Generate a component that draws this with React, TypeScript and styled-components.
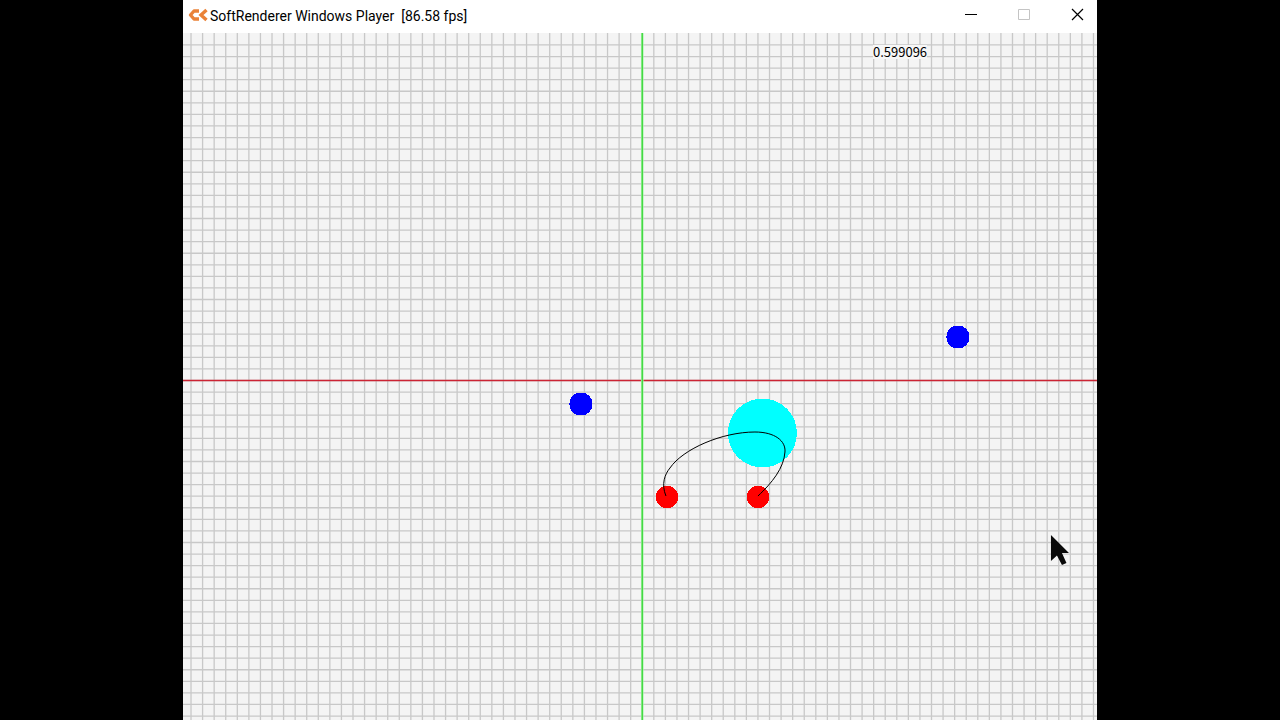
import React from "react";
import styled, { createGlobalStyle } from "styled-components";

const GlobalStyle = createGlobalStyle`
  * { box-sizing: border-box; }
  body { margin: 0; background: #000; overflow: hidden; }
`;

const Desktop = styled.main`
  display: flex;
  justify-content: center;
  height: 100vh;
  background: #000;
`;

const PlayerWindow = styled.section`
  display: flex;
  flex-direction: column;
  width: 71.4%;
  background: #f4f4f4;
`;

const TitleBar = styled.header`
  display: flex;
  flex: none;
  align-items: center;
  height: 33px;
  padding-left: 5px;
  background: #fff;
`;

const Logo = styled.svg`
  flex: none;
  width: 20px;
  height: 14px;
  margin-bottom: 4px;
`;

const Title = styled.h1`
  flex: 1;
  margin: 0;
  padding: 0 0 2px 2px;
  font: 400 14px/30px Roboto, "Noto Sans", sans-serif;
  color: #000;
  white-space: pre;
`;

const Controls = styled.div`
  display: flex;
  align-self: stretch;
  padding-bottom: 4px;
`;

const ControlButton = styled.button`
  display: flex;
  align-items: center;
  justify-content: center;
  width: 53px;
  padding: 0 0 0 14px;
  border: 0;
  background: transparent;
  color: #000;

  &:disabled { color: #c4c4c4; }
  svg { display: block; width: 13px; height: 13px; flex: none; }
`;

const Scene = styled.svg`
  display: block;
  flex: 1;
  width: 100%;
  min-height: 0;
`;

const Readout = styled.text`
  font: 400 13px "Noto Sans CJK KR", "Noto Sans", sans-serif;
  fill: #000;
`;

const STEP = 11.57;
const columns = Array.from({ length: 79 }, (_, i) => (i - 39) * STEP);
const rows = Array.from({ length: 59 }, (_, i) => (i - 29) * STEP);

const anchors = [{ x: 25, y: 117 }, { x: 116, y: 117 }];
const handles = [{ x: -61, y: 24 }, { x: 316, y: -43 }];

export default function App() {
  return (
    <>
      <GlobalStyle />
      <Desktop>
        <PlayerWindow>
          <TitleBar>
            <Logo viewBox="0 0 20 14" fill="none" stroke="#ea8238" strokeWidth="3.400" aria-hidden="true">
              <path d="M11 3H6L2.500 7 6 11h5" strokeLinejoin="round" />
              <path d="M18.500 2 13 7l5.500 5" />
            </Logo>
            <Title>{"SoftRenderer Windows Player  [86.58 fps]"}</Title>
            <Controls>
              <ControlButton type="button" aria-label="Minimize">
                <svg viewBox="0 0 13 13" stroke="currentColor"><path d="M0 6.500h12" /></svg>
              </ControlButton>
              <ControlButton type="button" aria-label="Maximize" disabled>
                <svg viewBox="0 0 13 13" fill="none" stroke="currentColor"><path d="M.5 1.500h11v10h-11z" /></svg>
              </ControlButton>
              <ControlButton type="button" aria-label="Close">
                <svg viewBox="0 0 13 13" stroke="currentColor" strokeWidth="1.200"><path d="m1 1 11 11M12 1 1 12" /></svg>
              </ControlButton>
            </Controls>
          </TitleBar>
          <Scene viewBox="-459 -347 914 687" preserveAspectRatio="xMidYMid slice" role="img" aria-label="Bezier curve">
            <g stroke="#c8c8c8" strokeWidth="1.300">
              {columns.map((p) => <line key={p} x1={p + 0.3} x2={p + 0.3} y1="-347" y2="340" />)}
              {rows.map((p) => <line key={p} x1="-459" x2="455" y1={p + 0.5} y2={p + 0.5} />)}
            </g>
            <path d="M-459 .5H455" stroke="#cc2434" strokeWidth="1.300" />
            <path d="M.3-347V340" stroke="#a8f5a8" strokeWidth="2.600" />
            <path d="M.3-347V340" stroke="#34d334" strokeWidth="1.200" />
            <g shapeRendering="crispEdges">
              <circle cx="120.500" cy="53" r="34.500" fill="#0ff" />
              {anchors.map((p) => <circle key={p.x} cx={p.x} cy={p.y} r="11.300" fill="#f00" />)}
              {handles.map((p) => <circle key={p.x} cx={p.x} cy={p.y} r="11.500" fill="#00f" />)}
            </g>
            <path
              d="M24 116C19 104 23 94 28 88C41 69 80 52 113 52C133 52 144 61 143 72C142 88 130 103 116 116"
              fill="none"
              stroke="#000"
            />
            <path d="M231-335h54v14h-54z" fill="#f7f7f7" />
            <Readout x="231" y="-323">0.599096</Readout>
            <path d="M409 155V181L415 175.500 420 185 424.500 183 420 173H427Z" fill="#080808" />
          </Scene>
        </PlayerWindow>
      </Desktop>
    </>
  );
}
